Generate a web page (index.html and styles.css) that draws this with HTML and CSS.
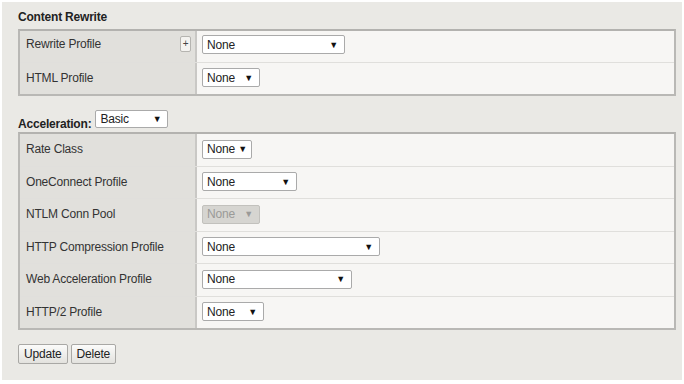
FILE: index.html
```html
<!DOCTYPE html>
<html>
<head>
<meta charset="utf-8">
<link rel="stylesheet" href="styles.css">
</head>
<body>
<div class="page">
  <div class="section-title">Content Rewrite</div>
  <div class="grp g1">
    <div class="row">
      <div class="lbl"><span>Rewrite Profile</span><span class="plus">+</span></div>
      <div class="val"><span class="sel w143"><span>None</span><span class="arr">&#9660;</span></span></div>
    </div>
    <div class="row">
      <div class="lbl"><span>HTML Profile</span></div>
      <div class="val"><span class="sel w58"><span>None</span><span class="arr">&#9660;</span></span></div>
    </div>
  </div>

  <div class="accel">
    <span class="accel-label">Acceleration:</span>
    <span class="sel w73"><span>Basic</span><span class="arr">&#9660;</span></span>
  </div>

  <div class="grp g2">
    <div class="row">
      <div class="lbl"><span>Rate Class</span></div>
      <div class="val"><span class="sel w50"><span>None</span><span class="arr">&#9660;</span></span></div>
    </div>
    <div class="row">
      <div class="lbl"><span>OneConnect Profile</span></div>
      <div class="val"><span class="sel w95"><span>None</span><span class="arr">&#9660;</span></span></div>
    </div>
    <div class="row">
      <div class="lbl"><span>NTLM Conn Pool</span></div>
      <div class="val"><span class="sel w58 dis"><span>None</span><span class="arr">&#9660;</span></span></div>
    </div>
    <div class="row">
      <div class="lbl"><span>HTTP Compression Profile</span></div>
      <div class="val"><span class="sel w178"><span>None</span><span class="arr">&#9660;</span></span></div>
    </div>
    <div class="row">
      <div class="lbl"><span>Web Acceleration Profile</span></div>
      <div class="val"><span class="sel w150"><span>None</span><span class="arr">&#9660;</span></span></div>
    </div>
    <div class="row">
      <div class="lbl"><span>HTTP/2 Profile</span></div>
      <div class="val"><span class="sel w62"><span>None</span><span class="arr">&#9660;</span></span></div>
    </div>
  </div>

  <div class="buttons">
    <span class="btn">Update</span>
    <span class="btn">Delete</span>
  </div>
</div>
</body>
</html>
```

FILE: styles.css
```css
* { box-sizing: border-box; }
html, body { margin: 0; padding: 0; background: #ffffff; }
body {
  font-family: "Liberation Sans", Arial, sans-serif;
  font-size: 12px;
  color: #333333;
}
.page {
  width: 680px;
  height: 378px;
  margin-left: 2px;
  margin-top: 2px;
  background: #eae9e5;
  padding: 8px 4px 0 16px;
}
.section-title {
  font-weight: bold;
  font-size: 12px;
  color: #222;
  height: 14px;
  line-height: 14px;
  margin-bottom: 5px;
  letter-spacing: -0.2px;
}
.grp {
  width: 658px;
  border: 2px solid #b9b8b5;
  border-top-color: #b3b2af;
  background: #f7f6f4;
}
.row {
  display: flex;
  height: 32px;
  border-top: 1px solid #e0dfdc;
}
.row:first-child { height: 31px; border-top: none; }
.g2 .row { height: 32px; }
.g2 .row:nth-child(odd) { height: 33px; }
.g2 .row:first-child { height: 32px; }
.lbl {
  width: 177px;
  flex: none;
  background: #e1e0dc;
  border-right: 2px solid #c9c8c5;
  padding: 0 4px 2px 6px;
  display: flex;
  align-items: center;
  justify-content: space-between;
  color: #333;
  letter-spacing: -0.2px;
}
.g1 .row:first-child .lbl { align-items: flex-start; padding-top: 6px; }
.val {
  flex: 1;
  display: flex;
  align-items: center;
  padding: 0 0 2px 5px;
}
.g1 .row:first-child .val { align-items: flex-start; padding-top: 4px; }
.plus {
  width: 11px;
  height: 16px;
  border: 1px solid #b5b4b0;
  border-radius: 2px;
  background: #f4f3f0;
  font-size: 10px;
  line-height: 13px;
  text-align: center;
  color: #444;
  margin-top: -1px;
}
.sel {
  display: inline-flex;
  align-items: center;
  justify-content: space-between;
  height: 19px;
  border: 1px solid #aaaaaa;
  border-radius: 2px;
  background: #ffffff;
  padding: 0 6px 0 4px;
  color: #222;
  font-size: 12px;
  letter-spacing: -0.2px;
}
.sel .arr { font-size: 9px; color: #111; }
.sel.dis { background: #d6d5d1; border-color: #c2c1bd; color: #9a9a98; }
.sel.dis .arr { color: #9a9a98; }
.w143 { width: 143px; }
.w58 { width: 58px; }
.w73 { width: 73px; }
.w50 { width: 50px; padding-right: 4px; }
.w95 { width: 95px; }
.w178 { width: 178px; }
.w150 { width: 150px; }
.w62 { width: 62px; }
.accel {
  display: flex;
  align-items: flex-end;
  margin-top: 14px;
  height: 21px;
  padding-bottom: 1px;
}
.accel-label {
  font-weight: bold;
  color: #222;
  margin-right: 4px;
  letter-spacing: -0.2px;
  line-height: 12px;
}
.accel .sel { height: 18px; margin-bottom: 2px; }
.g2 { margin-top: 1px; }
.buttons {
  display: flex;
  gap: 3px;
  margin-top: 14px;
}
.btn {
  display: inline-flex;
  align-items: center;
  height: 20px;
  padding: 0 5px;
  border: 1px solid #a9a8a5;
  border-radius: 2px;
  background: linear-gradient(#fbfbfa, #e3e2de);
  color: #222;
  font-size: 12px;
  letter-spacing: -0.2px;
}
```
